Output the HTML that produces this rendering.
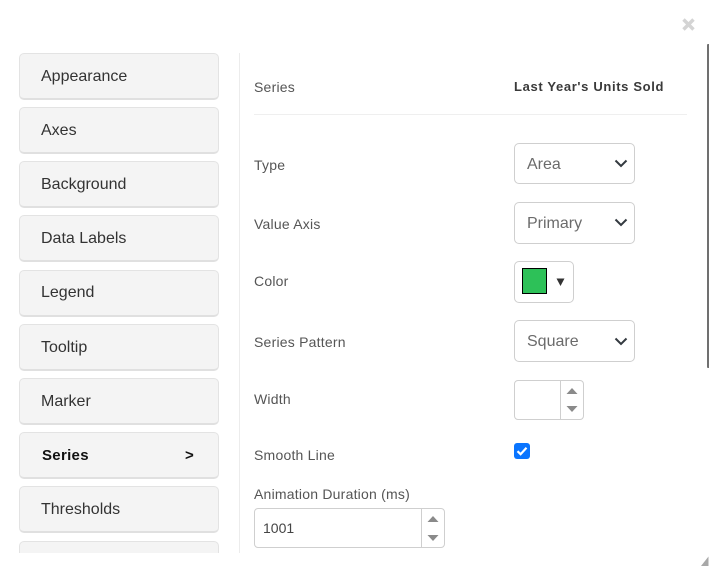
<!DOCTYPE html>
<html>
<head>
<meta charset="utf-8">
<style>
html,body{margin:0;padding:0;background:#fff}
body{width:709px;height:568px;position:relative;overflow:hidden;font-family:"Liberation Sans",sans-serif;color:#212529}
.a{position:absolute}
.side{position:absolute;left:0;top:0;width:239px;height:553px;overflow:hidden}
.btn{position:absolute;left:19px;width:198px;background:#f4f4f4;border:1px solid #e3e3e3;border-bottom:2px solid #e0e0e0;border-radius:5px;box-sizing:content-box;height:44px;font-size:16px;line-height:46px;text-indent:21px;color:#333;white-space:nowrap}
.lbl{position:absolute;left:254px;font-size:14px;line-height:18px;color:#555;letter-spacing:.22px;white-space:nowrap}
.sel{position:absolute;left:514px;width:119px;height:39px;border:1px solid #cfcfcf;border-radius:5px;background:#fff;font-size:16px;line-height:41px;text-indent:12px;color:#6b6b6b}
.sel svg{position:absolute;left:99px;top:15px}
.num{position:absolute;border:1px solid #cfcfcf;border-radius:4px;background:#fff;box-sizing:border-box}
.num i{position:absolute;top:0;bottom:0;width:1px;background:#cfcfcf}
.num svg{position:absolute}
</style>
</head>
<body>
<div class="side">
<div class="btn" style="top:53px">Appearance</div>
<div class="btn" style="top:107px">Axes</div>
<div class="btn" style="top:161px">Background</div>
<div class="btn" style="top:215px">Data Labels</div>
<div class="btn" style="top:270px;line-height:44px">Legend</div>
<div class="btn" style="top:324px">Tooltip</div>
<div class="btn" style="top:378px">Marker</div>
<div class="btn" style="top:432px;font-weight:bold;font-size:15px;color:#111;text-indent:22px;line-height:45px;letter-spacing:.3px">Series<span class="a" style="left:165px;top:0;text-indent:0;letter-spacing:0">&gt;</span></div>
<div class="btn" style="top:486px">Thresholds</div>
<div class="btn" style="top:541px"></div>
</div>
<div class="a" style="left:239px;top:53px;width:1px;height:500px;background:#ececec"></div>
<div class="a" style="left:254px;top:114px;width:433px;height:1px;background:#efefef"></div>

<svg class="a" style="left:681px;top:17px" width="15" height="15" viewBox="0 0 15 15"><path d="M2.5 2.5L12.5 12.5M12.5 2.5L2.5 12.5" stroke="#d4d4d4" stroke-width="3.4" fill="none"/></svg>
<div class="a" style="left:707px;top:44px;width:2px;height:324px;background:#707070;border-radius:1px 0 0 1px"></div>

<div class="lbl" style="top:78px">Series</div>
<div class="a" style="left:514px;top:78px;font-size:13px;line-height:18px;font-weight:bold;color:#3a3a3a;letter-spacing:.65px;white-space:nowrap">Last Year's Units Sold</div>

<div class="lbl" style="top:156px">Type</div>
<div class="sel" style="top:143px">Area<svg width="14" height="9" viewBox="0 0 14 9"><path d="M1.5 1.5L7 7L12.5 1.5" stroke="#343a40" stroke-width="2" fill="none"/></svg></div>

<div class="lbl" style="top:215px">Value Axis</div>
<div class="sel" style="top:202px;height:40px">Primary<svg width="14" height="9" viewBox="0 0 14 9"><path d="M1.5 1.5L7 7L12.5 1.5" stroke="#343a40" stroke-width="2" fill="none"/></svg></div>

<div class="lbl" style="top:272px">Color</div>
<div class="a" style="left:514px;top:261px;width:58px;height:40px;border:1px solid #cfcfcf;border-radius:5px;background:#fff"></div>
<div class="a" style="left:522px;top:268px;width:23px;height:24px;background:#2dc158;border:1px solid #000"></div>
<svg class="a" style="left:556px;top:278px" width="9" height="9" viewBox="0 0 9 9"><path d="M0.5 0.5H8.5L4.5 8Z" fill="#333"/></svg>

<div class="lbl" style="top:333px">Series Pattern</div>
<div class="sel" style="top:320px;height:40px">Square<svg style="top:16px" width="14" height="9" viewBox="0 0 14 9"><path d="M1.5 1.5L7 7L12.5 1.5" stroke="#343a40" stroke-width="2" fill="none"/></svg></div>

<div class="lbl" style="top:390px">Width</div>
<div class="num" style="left:514px;top:380px;width:70px;height:40px"><i style="left:45px"></i>
<svg style="left:51px;top:7px" width="12" height="6" viewBox="0 0 12 6"><path d="M0.5 6L6 0L11.5 6Z" fill="#8a8a8a"/></svg>
<svg style="left:51px;top:25px" width="12" height="6" viewBox="0 0 12 6"><path d="M0.5 0L6 6L11.5 0Z" fill="#8a8a8a"/></svg>
</div>

<div class="lbl" style="top:446px">Smooth Line</div>
<div class="a" style="left:514px;top:443px;width:16px;height:16px;background:#0a75ff;border-radius:3px"></div>
<svg class="a" style="left:514px;top:443px" width="16" height="16" viewBox="0 0 16 16"><path d="M3.5 8.2L6.6 11.2L12.5 4.8" stroke="#fff" stroke-width="2.2" fill="none"/></svg>

<div class="lbl" style="top:485px">Animation Duration (ms)</div>
<div class="num" style="left:254px;top:508px;width:191px;height:40px;font-size:14px;line-height:38px;text-indent:8px;color:#444">1001<i style="left:166px"></i>
<svg style="left:172px;top:7px" width="12" height="6" viewBox="0 0 12 6"><path d="M0.5 6L6 0L11.5 6Z" fill="#8a8a8a"/></svg>
<svg style="left:172px;top:26px" width="12" height="6" viewBox="0 0 12 6"><path d="M0.5 0L6 6L11.5 0Z" fill="#8a8a8a"/></svg>
</div>

<svg class="a" style="left:700px;top:556px" width="9" height="12" viewBox="0 0 9 12"><path d="M8.5 0.5V10H1Z" fill="#a8a8a8"/></svg>
</body>
</html>
